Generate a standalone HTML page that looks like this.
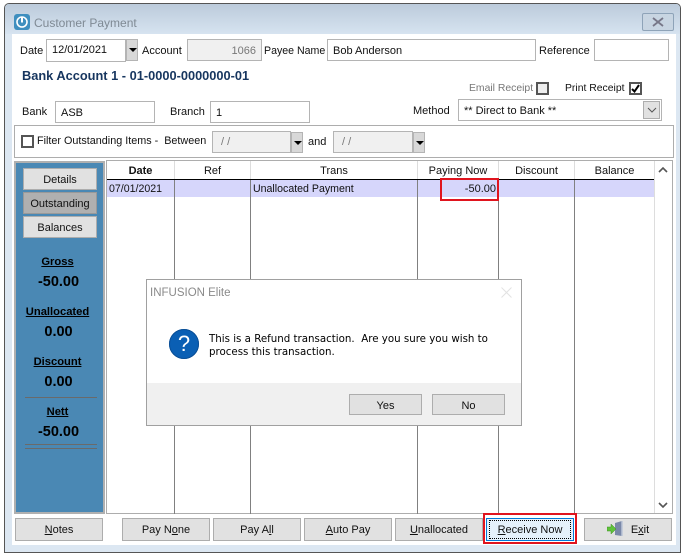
<!DOCTYPE html>
<html><head><meta charset="utf-8"><style>
html,body{margin:0;padding:0;background:#fff;width:687px;height:557px;overflow:hidden}
body{position:relative;font:11px "Liberation Sans",sans-serif;color:#111}
div,span.a{position:absolute;box-sizing:border-box}
.t{white-space:nowrap;line-height:14px}
.i{background:#fff;border:1px solid #b4b4b4;line-height:22px;padding-left:5px;white-space:nowrap}
.g{background:#f0f0f0}
.d{background:#d8d8d8;border:1px solid #b4b4b4}
.d:after{content:"";position:absolute;left:2px;top:8px;border:4px solid transparent;border-top:4px solid #000;border-bottom:0}
.b{background:#e1e1e1;border:1px solid #adadad;text-align:center;white-space:nowrap}
.c{width:13px;height:13px;border:2px solid #555;background:#fff}
.l{background:#808080;width:1px;top:180px;height:334px}
.h{top:164px;height:14px;line-height:14px;text-align:center;white-space:nowrap}
.s{color:#000;font-weight:bold;text-align:center;white-space:nowrap;left:14px;width:89px}
.u{text-decoration:underline;font-size:11.2px;line-height:14px;left:13px}
.v{font-size:14.5px;line-height:18px}
.r{background:#6a6a6a;height:1px;left:25px;width:72px}
u{text-decoration:underline}
</style></head><body>

<div style="left:4px;top:3px;width:677px;height:550px;border:1px solid #555;border-bottom-width:1px;border-radius:5px 5px 0 0;background:#dce7f2"></div>
<div style="left:5px;top:4px;width:675px;height:30px;background:linear-gradient(#bccbdb,#d6e3f0);border-radius:4px 4px 0 0"></div>
<div style="left:12px;top:34px;width:664px;height:511px;background:#fff"></div>

<!-- title -->
<svg style="position:absolute;left:14px;top:14px" width="16" height="16" viewBox="0 0 16 16"><rect width="16" height="16" rx="3" fill="#3f8fbf"/><circle cx="8" cy="8" r="5" fill="none" stroke="#fff" stroke-width="1.6"/><path d="M8 3.5V8.5" stroke="#fff" stroke-width="2"/></svg>
<div class="t" style="left:34px;top:16px;font-size:12px;color:#7f8a94">Customer Payment</div>
<div style="left:642px;top:13px;width:32px;height:18px;border:1px solid #8ea3b8;border-radius:2px;background:#c8d5e2"></div>
<svg style="position:absolute;left:651px;top:17px" width="14" height="10" viewBox="0 0 14 10"><path d="M2 1L12 9M12 1L2 9" stroke="#778" stroke-width="1.8" fill="none"/></svg>

<!-- row 1 -->
<div class="t" style="left:20px;top:44px">Date</div>
<div class="i" style="left:46px;top:39px;width:80px;height:23px;line-height:20px">12/01/2021</div>
<div class="d" style="left:126px;top:39px;width:12px;height:22px"></div>
<div class="t" style="left:142px;top:44px">Account</div>
<div class="i g" style="left:187px;top:39px;width:75px;height:22px;text-align:right;padding-right:5px;color:#777">1066</div>
<div class="t" style="left:264px;top:44px;font-size:10.6px">Payee Name</div>
<div class="i" style="left:327px;top:39px;width:209px;height:22px">Bob Anderson</div>
<div class="t" style="left:539px;top:44px">Reference</div>
<div class="i" style="left:594px;top:39px;width:75px;height:22px"></div>

<div class="t" style="left:22px;top:69px;font-size:12.8px;font-weight:bold;color:#17365f">Bank Account 1 - 01-0000-0000000-01</div>

<div class="t" style="left:469px;top:82px;color:#777;font-size:10.4px">Email Receipt</div>
<div class="c" style="left:536px;top:82px;background:#eee"></div>
<div class="t" style="left:565px;top:82px;font-size:10.4px">Print Receipt</div>
<div class="c" style="left:629px;top:82px"></div>
<svg style="position:absolute;left:631px;top:84px" width="9" height="9" viewBox="0 0 9 9"><path d="M1 5L3.5 7.5L8 1" stroke="#000" stroke-width="2" fill="none"/></svg>

<div class="t" style="left:22px;top:105px">Bank</div>
<div class="i" style="left:55px;top:101px;width:100px;height:22px">ASB</div>
<div class="t" style="left:170px;top:105px">Branch</div>
<div class="i" style="left:210px;top:101px;width:100px;height:22px">1</div>
<div class="t" style="left:413px;top:104px">Method</div>
<div class="i" style="left:458px;top:99px;width:204px;height:22px">** Direct to Bank **</div>
<div style="left:643px;top:101px;width:17px;height:18px;background:#e1e1e1;border:1px solid #adadad"></div>
<svg style="position:absolute;left:647px;top:107px" width="10" height="6" viewBox="0 0 10 6"><path d="M1 1L5 5L9 1" stroke="#555" fill="none"/></svg>

<!-- filter -->
<div style="left:14px;top:125px;width:660px;height:33px;border:1px solid #adadad"></div>
<div class="c" style="left:21px;top:135px"></div>
<div class="t" style="left:37px;top:134px;font-size:10.8px">Filter Outstanding Items -&nbsp; Between</div>
<div class="i g" style="left:212px;top:131px;width:79px;height:22px;color:#777;padding-left:8px;line-height:20px">/ /</div>
<div class="d" style="left:291px;top:132px;width:12px;height:21px"></div>
<div class="t" style="left:308px;top:135px">and</div>
<div class="i g" style="left:333px;top:131px;width:80px;height:22px;color:#777;padding-left:8px;line-height:20px">/ /</div>
<div class="d" style="left:413px;top:132px;width:12px;height:21px"></div>

<!-- left panel -->
<div style="left:14px;top:161px;width:91px;height:353px;background:#4a88b4;border:2px solid #b0b0b0"></div>
<div class="b" style="left:23px;top:168px;width:74px;height:22px;line-height:22px">Details</div>
<div class="b" style="left:23px;top:192px;width:74px;height:22px;line-height:22px;background:#b0b0b0;border-color:#999">Outstanding</div>
<div class="b" style="left:23px;top:216px;width:74px;height:22px;line-height:22px">Balances</div>
<div class="s u" style="top:255px">Gross</div>
<div class="s v" style="top:273px">-50.00</div>
<div class="s u" style="top:305px">Unallocated</div>
<div class="s v" style="top:323px">0.00</div>
<div class="s u" style="top:355px">Discount</div>
<div class="s v" style="top:373px">0.00</div>
<div class="r" style="top:397px"></div>
<div class="s u" style="top:405px">Nett</div>
<div class="s v" style="top:423px">-50.00</div>
<div class="r" style="top:444px"></div>
<div class="r" style="top:448px"></div>

<!-- grid -->
<div style="left:106px;top:160px;width:567px;height:354px;border:1px solid #adadad;background:#fff"></div>
<div style="left:107px;top:180px;width:548px;height:17px;background:#d6d6fb"></div>
<div style="left:107px;top:179px;width:548px;height:1px;background:#000"></div>
<div class="l" style="left:174px"></div>
<div class="l" style="left:250px"></div>
<div class="l" style="left:417px"></div>
<div class="l" style="left:498px"></div>
<div class="l" style="left:574px"></div>
<div style="left:174px;top:161px;width:1px;height:18px;background:#ddd"></div>
<div style="left:250px;top:161px;width:1px;height:18px;background:#ddd"></div>
<div style="left:417px;top:161px;width:1px;height:18px;background:#ddd"></div>
<div style="left:498px;top:161px;width:1px;height:18px;background:#ddd"></div>
<div style="left:574px;top:161px;width:1px;height:18px;background:#ddd"></div>
<div style="left:654px;top:161px;width:1px;height:352px;background:#ddd"></div>
<div class="h" style="left:107px;width:67px;font-weight:bold">Date</div>
<div class="h" style="left:175px;width:75px">Ref</div>
<div class="h" style="left:251px;width:166px">Trans</div>
<div class="h" style="left:418px;width:80px">Paying Now</div>
<div class="h" style="left:499px;width:75px">Discount</div>
<div class="h" style="left:575px;width:79px">Balance</div>
<div class="t" style="left:109px;top:182px;font-size:10.6px">07/01/2021</div>
<div class="t" style="left:253px;top:182px;font-size:10.6px">Unallocated Payment</div>
<div class="t" style="left:418px;top:182px;width:78px;text-align:right">-50.00</div>
<div style="left:440px;top:178px;width:59px;height:23px;border:2px solid #e0141e"></div>
<svg style="position:absolute;left:658px;top:166px" width="10" height="7" viewBox="0 0 10 7"><path d="M1 6L5 2L9 6" stroke="#555" stroke-width="1.6" fill="none"/></svg>
<svg style="position:absolute;left:658px;top:502px" width="10" height="7" viewBox="0 0 10 7"><path d="M1 1L5 5L9 1" stroke="#555" stroke-width="1.6" fill="none"/></svg>

<!-- dialog -->
<div style="left:146px;top:279px;width:376px;height:147px;background:#fff;border:1px solid #a0a0a0"></div>
<div style="left:147px;top:383px;width:374px;height:42px;background:#f0f0f0"></div>
<div class="t" style="left:150px;top:286px;font-size:11.5px;color:#8a8a8a">INFUSION Elite</div>
<svg style="position:absolute;left:501px;top:287px" width="11" height="11" viewBox="0 0 11 11"><path d="M.5 .5L10.5 10.5M10.5 .5L.5 10.5" stroke="#e2e2e2" fill="none"/></svg>
<svg style="position:absolute;left:169px;top:329px" width="30" height="30" viewBox="0 0 30 30"><circle cx="15" cy="15" r="15" fill="#0a5fb4"/><circle cx="15" cy="15" r="14.5" fill="none" stroke="#0b4f96"/></svg>
<div style="left:169px;top:329px;width:30px;height:30px;line-height:30px;text-align:center;color:#fff;font-size:22px">?</div>
<div class="t" style="left:209px;top:332px;font:10.25px/14px 'DejaVu Sans',sans-serif;color:#000">This is a Refund transaction.&nbsp; Are you sure you wish to</div>
<div class="t" style="left:209px;top:345px;font:10.25px/14px 'DejaVu Sans',sans-serif;color:#000">process this transaction.</div>
<div class="b" style="left:349px;top:394px;width:73px;height:21px;line-height:22px">Yes</div>
<div class="b" style="left:432px;top:394px;width:73px;height:21px;line-height:22px">No</div>

<!-- bottom buttons -->
<div class="b" style="left:15px;top:518px;width:88px;height:23px;line-height:22px"><u>N</u>otes</div>
<div class="b" style="left:122px;top:518px;width:88px;height:23px;line-height:22px">Pay N<u>o</u>ne</div>
<div class="b" style="left:213px;top:518px;width:88px;height:23px;line-height:22px">Pay A<u>l</u>l</div>
<div class="b" style="left:304px;top:518px;width:88px;height:23px;line-height:22px"><u>A</u>uto Pay</div>
<div class="b" style="left:395px;top:518px;width:88px;height:23px;line-height:22px"><u>U</u>nallocated</div>
<div class="b" style="left:486px;top:518px;width:88px;height:23px;line-height:22px;background:#e5f1fb;border-color:#0078d7"><u>R</u>eceive Now</div>
<div style="left:489px;top:520px;width:82px;height:19px;border:1px dotted #000"></div>
<div style="left:483px;top:513px;width:94px;height:31px;border:2px solid #e0141e"></div>
<div class="b" style="left:584px;top:518px;width:88px;height:23px;line-height:22px;padding-left:24px">E<u>x</u>it</div>
<svg style="position:absolute;left:607px;top:521px" width="17" height="16" viewBox="0 0 17 16"><path d="M8 2L15 0V15L8 14Z" fill="#7a88a8"/><path d="M15 0V15" stroke="#bcc6d8" stroke-width="1.5"/><path d="M0 6H4V3L9 8L4 13V10H0Z" fill="#5fc23a" stroke="#3c8f22" stroke-width=".5"/></svg>
</body></html>
